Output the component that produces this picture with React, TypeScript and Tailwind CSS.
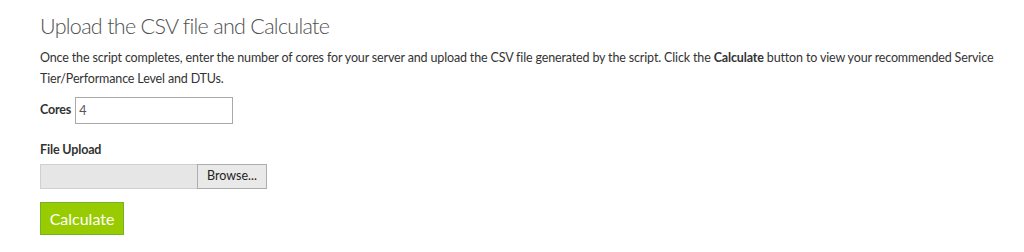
export default function App() {
  return (
    <div className="w-[1024px] h-[252px] bg-white pl-[40px] pr-[20px] pt-[11px] text-[#333] [font-family:Lato,sans-serif]">
      <h2 className="text-[21.5px] font-light leading-[30px] text-[#505050] tracking-[-0.7px]">
        Upload the CSV file and Calculate
      </h2>
      <p className="mt-[6px] text-[12.5px] leading-[21px] text-[#333] tracking-[-0.15px]">
        Once the script completes, enter the number of cores for your server and upload the CSV file generated by the
        script. Click the <b className="font-bold">Calculate</b> button to view your recommended Service
        Tier/Performance Level and DTUs.
      </p>
      <div className="mt-[8px] flex items-center">
        <label className="text-[12.5px] font-bold mr-[4px] tracking-[-0.15px]">Cores</label>
        <input
          defaultValue="4"
          className="w-[158px] h-[27px] border border-[#a9a9a9] px-[3px] text-[12.5px] text-[#555] outline-none"
        />
      </div>
      <div className="mt-[15px] text-[12.5px] font-bold leading-[21px] tracking-[-0.15px]">File Upload</div>
      <div className="mt-[4px] flex h-[25px]">
        <div className="w-[157px] bg-[#e6e6e6] border border-[#d0d0d0] border-r-0" />
        <button className="w-[70px] bg-[#e9e9e9] border border-[#adadad] text-[12.5px] text-[#222]">Browse...</button>
      </div>
      <button className="mt-[13px] h-[33px] w-[84px] bg-[#99cc00] border border-[#6fb52c] text-white text-[16px] leading-none">
        Calculate
      </button>
    </div>
  );
}
